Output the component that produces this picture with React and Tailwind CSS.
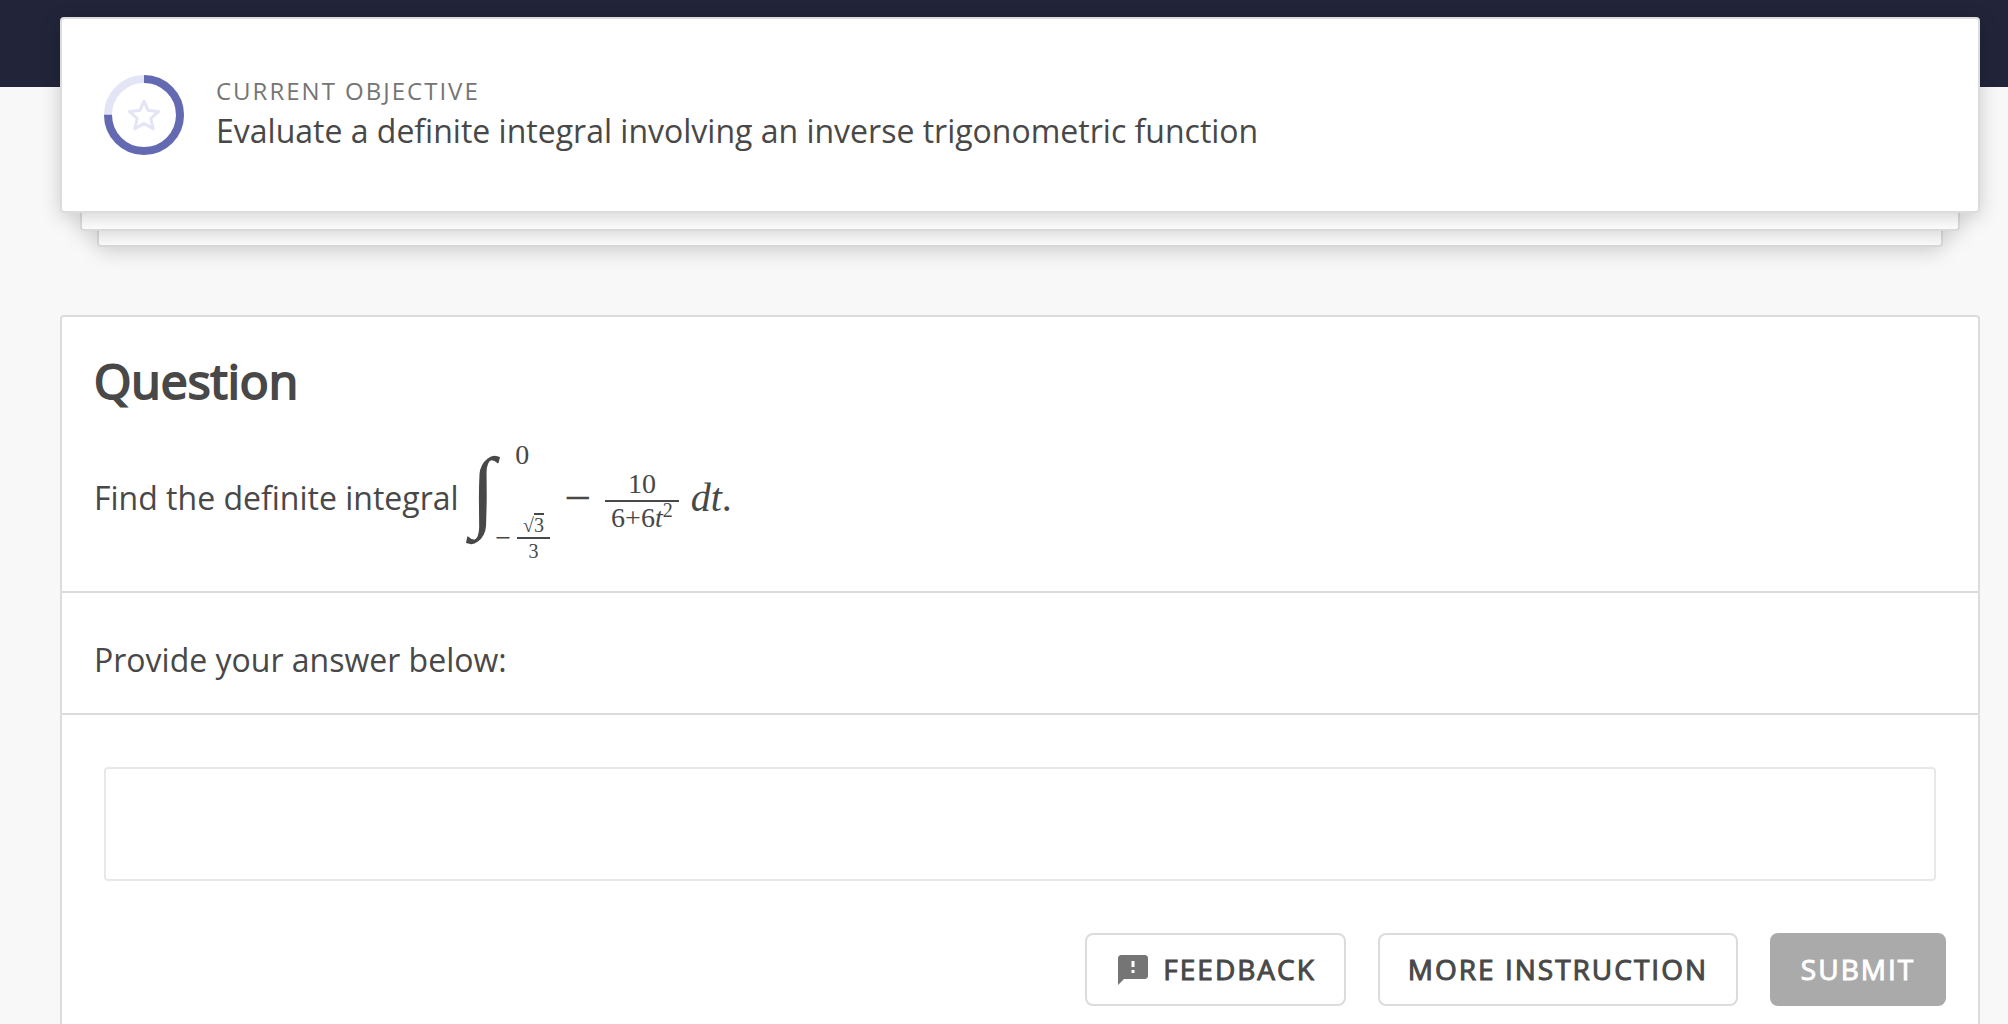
import React, { useState } from "react";
import { MdFeedback } from "react-icons/md";

/* ================= PROGRESS RING ================= */
const ProgressRing = ({ percent }) => {
  const radius = 36;
  const length = 2 * Math.PI * radius;

  return (
    <svg viewBox="0 0 80 80" className="size-20 shrink-0" fill="none" aria-hidden="true">
      <circle cx="40" cy="40" r={radius} stroke="#e4e4f7" strokeWidth="8" />
      <circle
        cx="40"
        cy="40"
        r={radius}
        stroke="#646ab1"
        strokeWidth="8"
        strokeDasharray={`${(length * percent) / 100} ${length}`}
        transform="rotate(-90 40 40)"
      />
      <path
        d="M40 26.2l4.2 9.4 10.3 1-7.7 6.9 2.3 10.2-9.1-5.3-9.1 5.3 2.3-10.2-7.7-6.9 10.3-1z"
        stroke="#e4e4f7"
        strokeWidth="3"
        strokeLinejoin="round"
      />
    </svg>
  );
};

/* ================= OBJECTIVE ================= */
const ObjectiveStack = () => (
  <section className="relative isolate -mt-[70px]">
    <div className="relative z-20 flex items-center gap-8 rounded border-2 border-[#dcdcdc] bg-white px-[42px] py-14 shadow-[0_4px_20px_rgba(0,0,0,0.18)]">
      <ProgressRing percent={75} />
      <div>
        <p className="text-2xl leading-8 tracking-[2px] text-[#757575]">CURRENT OBJECTIVE</p>
        <h1 className="text-[32px] leading-12">
          Evaluate a definite integral involving an inverse trigonometric function
        </h1>
      </div>
    </div>
    <div className="relative z-10 mx-5 h-[18px] rounded-b border-2 border-t-0 border-[#dcdcdc] bg-white shadow-[0_4px_20px_rgba(0,0,0,0.18)]" />
    <div className="relative mx-[37px] h-4 rounded-b border-2 border-t-0 border-[#dcdcdc] bg-white shadow-[0_4px_20px_rgba(0,0,0,0.18)]" />
  </section>
);

/* ================= FORMULA ================= */
const Fraction = ({ top, bottom }) => (
  <span className="flex flex-col items-center">
    <span className="flex justify-center px-1.5">{top}</span>
    <span className="h-[2px] w-full bg-[#484848]" />
    <span className="flex justify-center px-1.5">{bottom}</span>
  </span>
);

const Integral = () => (
  <span className="flex items-center font-['Liberation_Serif',serif] text-[40px] leading-10">
    <span className="pb-4 text-[90px] leading-[100px] italic">∫</span>
    <span className="flex flex-col gap-11 text-[28px] leading-7">
      <span className="pt-2 pl-5">0</span>
      <span className="flex items-center gap-1.5">
        <span>−</span>
        <span className="text-xl leading-6">
          <Fraction
            top={
              <>
                √<span className="border-t-2 border-[#484848] leading-5">3</span>
              </>
            }
            bottom="3"
          />
        </span>
      </span>
    </span>
    <span className="px-3.5 text-5xl leading-10">−</span>
    <span className="pt-1.5 text-[28px] leading-8">
      <Fraction
        top="10"
        bottom={
          <span>
            6+6<i>t</i>
            <sup className="text-xl leading-none">2</sup>
          </span>
        }
      />
    </span>
    <span className="pl-3">
      <i>dt</i>.
    </span>
  </span>
);

/* ================= BUTTONS ================= */
const Button = ({ children, ...props }) => (
  <button
    type="button"
    className="flex min-w-44 items-center justify-center gap-3 rounded-lg border-2 border-[#dcdcdc] px-7 py-4 text-[28px] leading-[37px] tracking-[2px] [-webkit-text-stroke:1px] disabled:border-[#aaaaaa] disabled:bg-[#aaaaaa] disabled:text-white"
    {...props}
  >
    {children}
  </button>
);

const App = () => {
  const [answer, setAnswer] = useState("");

  return (
    <div className="flex min-h-screen flex-col bg-[#f8f8f8] font-['Open_Sans',sans-serif] text-[#484848]">
      <header className="h-[87px] bg-[#222439]" />

      <main className="flex flex-1 flex-col gap-[68px] pr-7 pl-15">
        <ObjectiveStack />

        <section className="flex-1 rounded-t border-2 border-b-0 border-[#dcdcdc] bg-white">
          <div className="border-b-2 border-[#dcdcdc] px-8 pt-8 pb-7">
            <h2 className="text-5xl leading-16 [-webkit-text-stroke:2px]">Question</h2>
            <div className="mt-5 flex items-center gap-3 text-[32px] leading-12">
              <span>Find the definite integral</span>
              <Integral />
            </div>
          </div>

          <form onSubmit={(e) => e.preventDefault()}>
            <label
              htmlFor="answer"
              className="block border-b-2 border-[#dcdcdc] px-8 pt-[43px] pb-[29px] text-[32px] leading-12"
            >
              Provide your answer below:
            </label>

            <div className="px-[42px] pt-13">
              <input
                id="answer"
                type="text"
                value={answer}
                onChange={(e) => setAnswer(e.target.value)}
                className="block h-[114px] w-full rounded border-2 border-[#e8e8e8] px-6 text-[32px] outline-none"
              />
            </div>

            <div className="flex justify-end gap-8 px-8 pt-13 pb-4">
              <Button>
                <MdFeedback size={36} className="text-[#757575]" />
                FEEDBACK
              </Button>
              <Button>MORE INSTRUCTION</Button>
              <Button type="submit" disabled={!answer}>
                SUBMIT
              </Button>
            </div>
          </form>
        </section>
      </main>
    </div>
  );
};

export default App;
